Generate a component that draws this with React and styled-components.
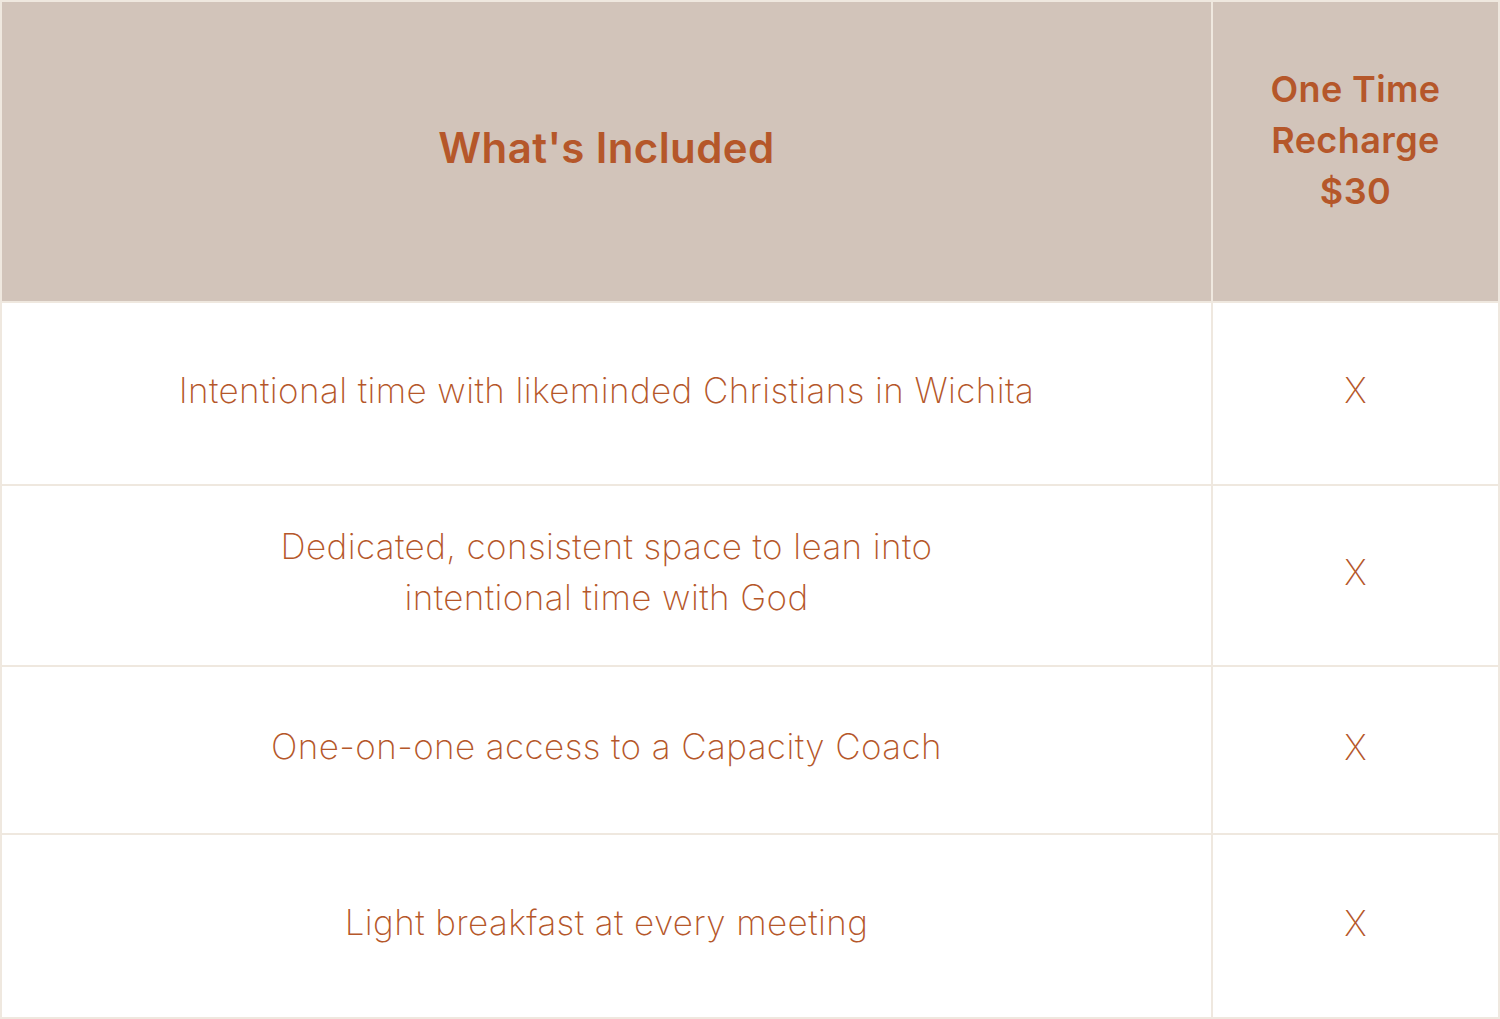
import React from 'react';
import styled, { createGlobalStyle } from 'styled-components';

const GlobalStyle = createGlobalStyle`
  html, body {
    margin: 0;
    padding: 0;
    background: #ffffff;
  }
  body {
    font-family: Inter, "Noto Sans", sans-serif;
  }
`;

const Table = styled.div`
  width: 1500px;
  box-sizing: border-box;
  padding: 2px;
  display: grid;
  gap: 2px;
  background: #efe8df;
`;

const Row = styled.div`
  display: grid;
  grid-template-columns: 1209px 285px;
  gap: 2px;
  height: ${props => props.height}px;
`;

const Cell = styled.div`
  display: flex;
  align-items: center;
  justify-content: center;
  text-align: center;
  box-sizing: border-box;
  padding-bottom: ${props => props.lift || 0}px;
  background: ${props => (props.head ? '#d2c4ba' : '#ffffff')};
  color: #b5572a;
`;

const HeadTitle = styled.div`
  font-size: 42px;
  font-weight: 600;
  letter-spacing: 0.4px;
`;

const HeadPlan = styled.div`
  font-size: 36px;
  font-weight: 600;
  line-height: 51px;
  letter-spacing: 0.4px;
`;

const Feature = styled.div`
  font-size: 35px;
  font-weight: 200;
  line-height: 51px;
  letter-spacing: 0.4px;
`;

const Mark = styled.div`
  font-size: 35px;
  font-weight: 200;
`;

const features = [
  { height: 181, text: ['Intentional time with likeminded Christians in Wichita'] },
  { height: 179, text: ['Dedicated, consistent space to lean into', 'intentional time with God'] },
  { height: 166, text: ['One-on-one access to a Capacity Coach'] },
  { height: 182, text: ['Light breakfast at every meeting'] },
];

export default function App() {
  return (
    <>
      <GlobalStyle />
      <Table>
        <Row height={299}>
          <Cell head lift={8}>
            <HeadTitle>What's Included</HeadTitle>
          </Cell>
          <Cell head lift={22}>
            <HeadPlan>
              One Time
              <br />
              Recharge
              <br />
              $30
            </HeadPlan>
          </Cell>
        </Row>
        {features.map((f, i) => (
          <Row key={i} height={f.height}>
            <Cell lift={7}>
              <Feature>
                {f.text.map((line, j) => (
                  <React.Fragment key={j}>
                    {j > 0 && <br />}
                    {line}
                  </React.Fragment>
                ))}
              </Feature>
            </Cell>
            <Cell lift={7}>
              <Mark>X</Mark>
            </Cell>
          </Row>
        ))}
      </Table>
    </>
  );
}
